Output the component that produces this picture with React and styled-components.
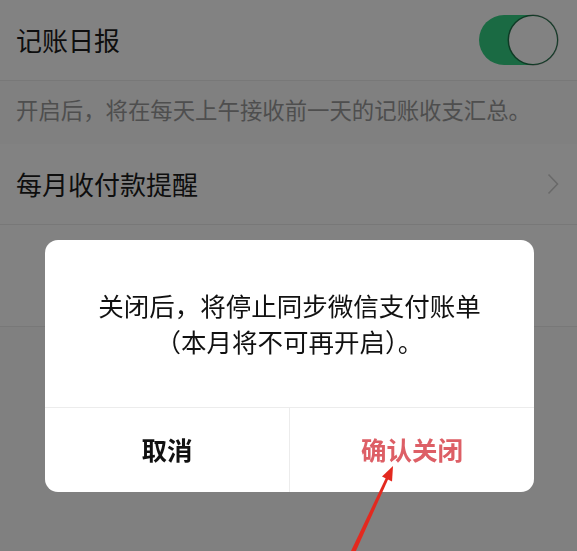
import React, { useState } from "react";
import styled, { createGlobalStyle } from "styled-components";

const GlobalStyle = createGlobalStyle`
  html, body {
    margin: 0;
    padding: 0;
    background: #fbfbfb;
  }
  body {
    font-family: "Noto Sans CJK SC", "Noto Sans", sans-serif;
  }
  * {
    box-sizing: border-box;
  }
`;

const Page = styled.div`
  min-height: 100vh;
  background: #fbfbfb;
  overflow: hidden;
`;

const Row = styled.div`
  height: ${(p) => p.height || 81}px;
  padding: 0 16px;
  display: flex;
  align-items: center;
  justify-content: space-between;
  background: #fff;
  border-bottom: 1px solid #ececec;
`;

const RowTitle = styled.span`
  font-size: 26px;
  line-height: 34px;
  color: #1c1c1c;
`;

const Hint = styled.div`
  height: 63px;
  padding: 15px 16px 22px;
  font-size: 22.4px;
  line-height: 26px;
  color: #9a9a9a;
  white-space: nowrap;
`;

const Track = styled.button`
  width: 79px;
  height: 50px;
  padding: 1px;
  margin-right: 3px;
  border: none;
  border-radius: 25px;
  background: ${(p) => (p.on ? "#34d084" : "#e5e5e5")};
  display: flex;
  justify-content: ${(p) => (p.on ? "flex-end" : "flex-start")};
  cursor: pointer;
`;

const Knob = styled.span`
  width: 48px;
  height: 48px;
  border-radius: 50%;
  background: #fff;
  box-shadow: 0 0 0 1.5px rgba(0, 0, 0, 0.45);
`;

const Chevron = styled.svg`
  width: 12px;
  height: 22px;
  margin-right: 2px;
`;

const Mask = styled.div`
  position: fixed;
  inset: 0;
  background: rgba(0, 0, 0, 0.49);
  display: flex;
  flex-direction: column;
  align-items: center;
  padding: 240px 0 0 2px;
`;

const Dialog = styled.div`
  width: 489px;
  background: #fff;
  border-radius: 13px;
  overflow: hidden;
`;

const Message = styled.div`
  height: 167px;
  display: flex;
  align-items: center;
  justify-content: center;
  text-align: center;
  font-size: 25.5px;
  line-height: 36px;
  color: #111;
  padding-bottom: 2px;
`;

const Actions = styled.div`
  height: 85px;
  display: flex;
  border-top: 1px solid #ececec;
`;

const ActionButton = styled.button`
  flex: 1;
  border: none;
  background: transparent;
  font-family: inherit;
  font-size: 25.5px;
  font-weight: 700;
  color: ${(p) => (p.danger ? "#dd5f66" : "#111")};
  padding: 0 0 4px;
  & + & {
    border-left: 1px solid #ececec;
  }
`;

const Arrow = styled.svg`
  position: fixed;
  left: 340px;
  top: 455px;
  width: 70px;
  height: 96px;
  overflow: visible;
`;

export default function App() {
  const [daily, setDaily] = useState(true);

  return (
    <Page>
      <GlobalStyle />
      <Row>
        <RowTitle>记账日报</RowTitle>
        <Track on={daily} onClick={() => setDaily(!daily)}>
          <Knob />
        </Track>
      </Row>
      <Hint>开启后，将在每天上午接收前一天的记账收支汇总。</Hint>
      <Row>
        <RowTitle>每月收付款提醒</RowTitle>
        <Chevron viewBox="0 0 12 22">
          <path d="M1.5 1.5 L10.5 11 L1.5 20.5" fill="none" stroke="#cfcfcf" strokeWidth="1.6" />
        </Chevron>
      </Row>
      <Row height={102} />

      <Mask>
        <Dialog>
          <Message>
            关闭后，将停止同步微信支付账单
            <br />
            （本月将不可再开启）。
          </Message>
          <Actions>
            <ActionButton>取消</ActionButton>
            <ActionButton danger>确认关闭</ActionButton>
          </Actions>
        </Dialog>
        <Arrow viewBox="0 0 70 96">
          <polygon points="10.5,97 15.5,97 48.5,23.5 46,22.5" fill="#e3291f" />
          <polygon points="53,11 52,26.5 42,21.5" fill="#e3291f" />
        </Arrow>
      </Mask>
    </Page>
  );
}
